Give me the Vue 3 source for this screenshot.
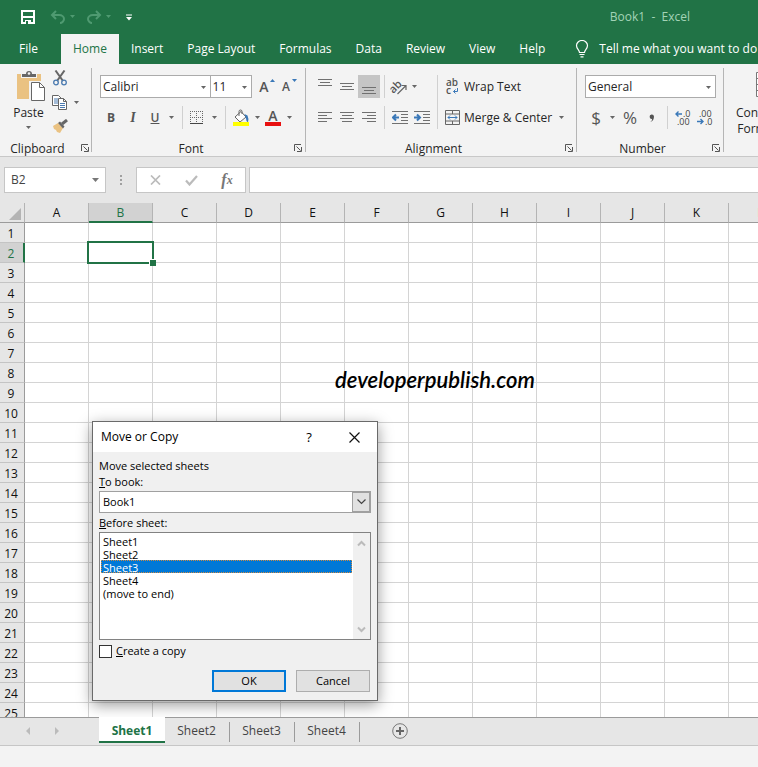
<script setup>
import { ref } from 'vue'

const tabs = ['File', 'Home', 'Insert', 'Page Layout', 'Formulas', 'Data', 'Review', 'View', 'Help']
const activeTab = ref('Home')

const columns = 'ABCDEFGHIJKLMNOP'.split('')
const rowCount = 40
const selectedCol = 'B'
const selectedRow = 2

const sheets = ['Sheet1', 'Sheet2', 'Sheet3', 'Sheet4']
const activeSheet = ref('Sheet1')

const targets = [...sheets, '(move to end)']
const beforeSheet = ref('Sheet3')
const book = ref('Book1')
const createCopy = ref(false)
const cellRef = ref('B2')
const formula = ref('')
const font = ref('Calibri')
const size = ref('11')
const format = ref('General')
</script>

<template>
  <div class="app">
    <header class="titlebar">
      <div class="quick">
        <button class="qbtn" aria-label="Save">
          <svg width="14" height="14" viewBox="0 0 14 14"><path d="M1 1h12v12H1z" fill="none" stroke="#fff" stroke-width="2" /><path d="M2 7h10" stroke="#fff" stroke-width="2" /><path d="M4 10h6v4H4z" fill="#fff" /><path d="M5 11h2v3H5z" fill="#217346" /></svg>
        </button>
        <button class="qbtn undo" aria-label="Undo">
          <svg width="26" height="14" viewBox="0 0 26 14"><path d="M6 1L2 5l4 4M2 5h7c3 0 5 2 5 4s-2 4-4 4" fill="none" stroke="#4f9a71" stroke-width="2" /><path d="M20 5h5l-2.500 3z" fill="#4f9a71" /></svg>
        </button>
        <button class="qbtn redo" aria-label="Redo">
          <svg width="26" height="14" viewBox="0 0 26 14"><path d="M10 1l4 4-4 4M14 5H7C4 5 2 7 2 9s2 4 4 4" fill="none" stroke="#4f9a71" stroke-width="2" /><path d="M20 5h5l-2.500 3z" fill="#4f9a71" /></svg>
        </button>
        <button class="qbtn more" aria-label="Customize toolbar">
          <svg width="6" height="7" viewBox="0 0 6 7"><path d="M0 1h6" stroke="#fff" /><path d="M0 3h6L3 6.500z" fill="#fff" /></svg>
        </button>
      </div>
      <div class="doc-title">Book1&nbsp; -&nbsp; Excel</div>
    </header>

    <nav class="tabs">
      <a v-for="t in tabs" :key="t" href="#" class="tab" :class="{ active: t === activeTab, file: t === 'File' }" @click.prevent="activeTab = t">{{ t }}</a>
      <a href="#" class="tell">
        <svg width="14" height="18" viewBox="0 0 14 18"><path d="M4.500 12.500c0-2.500-3-3.500-3-7a5.500 5 0 0 1 11 0c0 3.500-3 4.500-3 7zM4.500 14.500h5M5.500 16.800h3" fill="none" stroke="#fff" stroke-width="1.200" /></svg>
        <span>Tell me what you want to do</span>
      </a>
    </nav>

    <section class="ribbon">
      <div class="group clipboard">
        <div class="clip-body">
          <button class="paste">
            <svg width="30" height="32" viewBox="0 0 30 32"><path d="M1 4h24v25H1z" fill="#eac282" /><path d="M5 2h16v6H5z" fill="#f3f3f3" /><path d="M6 4h4a3 3 0 0 1 6 0h4v3H6z" fill="#666" /><circle cx="13" cy="3.500" r="1.300" fill="#f3f3f3" /><path d="M13 11h12l4 4v17H13z" fill="#f3f3f3" /><path d="M15.500 12.500h8l5 5v13h-13z" fill="#fff" stroke="#666" /><path d="M23.500 12.500v5h5" fill="none" stroke="#666" /></svg>
            <span>Paste</span>
            <svg class="arrow" width="5" height="3" viewBox="0 0 5 3"><path d="M0 0h5L2.500 3z" /></svg>
          </button>
          <div class="clip-side">
            <button class="ib" aria-label="Cut">
              <svg width="16" height="16" viewBox="0 0 16 16"><path d="M3.500 0.500L11 11M12.500 0.500L5 11" stroke="#666" stroke-width="2" fill="none" /><circle cx="4" cy="12.500" r="2.300" fill="none" stroke="#4a7ab0" stroke-width="1.300" /><circle cx="12" cy="12.500" r="2.300" fill="none" stroke="#4a7ab0" stroke-width="1.300" /></svg>
            </button>
            <div class="pair">
              <button class="ib" aria-label="Copy">
                <svg width="16" height="15" viewBox="0 0 16 15"><path d="M.5.5h6l3 3v7h-9z" fill="#fff" stroke="#666" /><path d="M2 4h4M2 6h4M2 8h4" stroke="#4a7ab0" /><path d="M6.500 3.500h5l3 3v8h-8z" fill="#fff" stroke="#666" /><path d="M11.500 3.500v3h3" stroke="#666" fill="none" /><path d="M8 8.500h5M8 10.500h5M8 12.500h5" stroke="#4a7ab0" /></svg>
              </button>
              <button class="drop" aria-label="Copy options"><svg class="arrow" width="5" height="3" viewBox="0 0 5 3"><path d="M0 0h5L2.500 3z" /></svg></button>
            </div>
            <button class="ib" aria-label="Format Painter">
              <svg width="16" height="14" viewBox="0 0 16 14"><path d="M1 7l5-3 5 5-3 5-3-1-1-2-2-1z" fill="#eac282" /><path d="M6 4l2-1.500 4.500 5L11 9.500z" fill="#666" /><path d="M10 5l5-4" stroke="#666" stroke-width="3" /></svg>
            </button>
          </div>
        </div>
        <div class="foot"><span>Clipboard</span><button class="launch" aria-label="Clipboard settings"><svg width="8" height="8" viewBox="0 0 8 8"><path d="M.5 7V.5H7M2.500 2.500l4 4M7.500 3v4.500H3" /></svg></button></div>
      </div>

      <div class="group fontg">
        <div class="rows">
          <div class="row">
            <div class="sel w-font"><select v-model="font" aria-label="Font"><option>Calibri</option></select><svg class="arrow" width="5" height="3" viewBox="0 0 5 3"><path d="M0 0h5L2.500 3z" /></svg></div>
            <div class="sel w-size"><select v-model="size" aria-label="Font size"><option>11</option></select><svg class="arrow" width="5" height="3" viewBox="0 0 5 3"><path d="M0 0h5L2.500 3z" /></svg></div>
            <button class="glyph grow" aria-label="Increase font size"><span>A</span><svg width="5" height="3" viewBox="0 0 5 3"><path d="M0 3h5L2.500 0z" fill="#3a78b8" /></svg></button>
            <button class="glyph shrink" aria-label="Decrease font size"><span>A</span><svg width="5" height="3" viewBox="0 0 5 3"><path d="M0 0h5L2.500 3z" fill="#3a78b8" /></svg></button>
          </div>
          <div class="row">
            <button class="b22 bold">B</button>
            <button class="b22 ital">I</button>
            <button class="b22 under">U</button>
            <button class="drop" aria-label="Underline styles"><svg class="arrow" width="5" height="3" viewBox="0 0 5 3"><path d="M0 0h5L2.500 3z" /></svg></button>
            <i class="sep s6"></i>
            <button class="b20" aria-label="Borders">
              <svg width="14" height="14" viewBox="0 0 14 14"><path d="M.5 0v13M6.500 0v13M12.500 0v13M0 .5h13M0 6.500h13" stroke="#666" stroke-dasharray="1 1" fill="none" /><path d="M0 12.500h13" stroke="#444" /></svg>
            </button>
            <button class="drop d14" aria-label="Border styles"><svg class="arrow" width="5" height="3" viewBox="0 0 5 3"><path d="M0 0h5L2.500 3z" /></svg></button>
            <i class="sep s4"></i>
            <button class="b22" aria-label="Fill color">
              <svg width="18" height="18" viewBox="0 0 18 18"><path d="M3 8l6-5.500L14 8l-6 5z" fill="#fff" stroke="#666" /><path d="M7 7V2.500a1.500 1.500 0 0 1 3 0V5" fill="none" stroke="#666" /><path d="M12.500 5l3 1.500q1.500 3 .5 7-2-1-2-4z" fill="#3a78b8" /><path d="M1 13h16v4H1z" fill="#ff0" /></svg>
            </button>
            <button class="drop" aria-label="Fill colors"><svg class="arrow" width="5" height="3" viewBox="0 0 5 3"><path d="M0 0h5L2.500 3z" /></svg></button>
            <button class="b22 fcolor" aria-label="Font color"><span>A</span></button>
            <button class="drop" aria-label="Font colors"><svg class="arrow" width="5" height="3" viewBox="0 0 5 3"><path d="M0 0h5L2.500 3z" /></svg></button>
          </div>
        </div>
        <div class="foot"><span>Font</span><button class="launch" aria-label="Font settings"><svg width="8" height="8" viewBox="0 0 8 8"><path d="M.5 7V.5H7M2.500 2.500l4 4M7.500 3v4.500H3" /></svg></button></div>
      </div>

      <div class="group align">
        <div class="align-body">
          <div class="rows align-left">
            <div class="row">
              <button class="b22" aria-label="Top align"><svg class="ln" width="14" height="16" viewBox="0 0 14 16"><path d="M0 .5h14M2 3.500h10M0 6.500h14" /></svg></button>
              <button class="b22" aria-label="Middle align"><svg class="ln" width="14" height="16" viewBox="0 0 14 16"><path d="M0 4.500h14M2 7.500h10M0 10.500h14" /></svg></button>
              <button class="b22 on" aria-label="Bottom align"><svg class="ln" width="14" height="16" viewBox="0 0 14 16"><path d="M0 8.500h14M2 11.500h10M0 14.500h14" /></svg></button>
              <i class="sep s4"></i>
              <button class="b20" aria-label="Orientation">
                <svg width="18" height="18" viewBox="0 0 18 18"><text x="-1" y="12" transform="rotate(-45 6 9)" class="ab big">ab</text><path d="M7.500 16L15.500 8M11.500 7.500h4.500v4.500" fill="none" stroke="#666" stroke-width="1.200" /></svg>
              </button>
              <button class="drop" aria-label="Orientation options"><svg class="arrow" width="5" height="3" viewBox="0 0 5 3"><path d="M0 0h5L2.500 3z" /></svg></button>
            </div>
            <div class="row">
              <button class="b22" aria-label="Align left"><svg class="ln" width="14" height="12" viewBox="0 0 14 12"><path d="M0 .5h14M0 3.500h9M0 6.500h14M0 9.500h9" /></svg></button>
              <button class="b22" aria-label="Center"><svg class="ln" width="14" height="12" viewBox="0 0 14 12"><path d="M0 .5h14M2 3.500h10M0 6.500h14M2 9.500h10" /></svg></button>
              <button class="b22" aria-label="Align right"><svg class="ln" width="14" height="12" viewBox="0 0 14 12"><path d="M0 .5h14M5 3.500h9M0 6.500h14M5 9.500h9" /></svg></button>
              <i class="sep s4"></i>
              <button class="b22" aria-label="Decrease indent"><svg class="ln" width="16" height="14" viewBox="0 0 16 14"><path d="M0 .5h16M9 3.500h7M9 6.500h7M9 9.500h7M0 12.500h16" /><path d="M7 6.500H1M4 3.500l-3 3 3 3" class="blue" /></svg></button>
              <button class="b22" aria-label="Increase indent"><svg class="ln" width="16" height="14" viewBox="0 0 16 14"><path d="M0 .5h16M9 3.500h7M9 6.500h7M9 9.500h7M0 12.500h16" /><path d="M0 6.500h6M3 3.500l3 3-3 3" class="blue" /></svg></button>
            </div>
          </div>
          <i class="longsep"></i>
          <div class="rows">
            <div class="row">
              <button class="wide">
                <svg width="16" height="18" viewBox="0 0 16 18"><text x="1" y="8" class="ab">ab</text><text x="1" y="16" class="ab">c</text><path d="M12.500 10v3.500H8.500M10.500 11.500l-2 2 2 2" fill="none" stroke="#3a78b8" /></svg>
                <span>Wrap Text</span>
              </button>
            </div>
            <div class="row">
              <button class="wide">
                <svg width="16" height="16" viewBox="0 0 16 16"><path d="M.5.500h14v14H.5zM.5 4h14M.5 11h14M7.500 0v4M7.500 11v4" fill="none" stroke="#666" /><path d="M3 7.500h9M5 5.500l-2 2 2 2M10 5.500l2 2-2 2" fill="none" stroke="#3a78b8" /></svg>
                <span>Merge &amp; Center</span>
              </button>
              <button class="drop mdrop" aria-label="Merge options"><svg class="arrow" width="5" height="3" viewBox="0 0 5 3"><path d="M0 0h5L2.500 3z" /></svg></button>
            </div>
          </div>
        </div>
        <div class="foot"><span>Alignment</span><button class="launch" aria-label="Alignment settings"><svg width="8" height="8" viewBox="0 0 8 8"><path d="M.5 7V.5H7M2.500 2.500l4 4M7.500 3v4.500H3" /></svg></button></div>
      </div>

      <div class="group number">
        <div class="rows">
          <div class="row">
            <div class="sel w-format"><select v-model="format" aria-label="Number format"><option>General</option></select><svg class="arrow" width="5" height="3" viewBox="0 0 5 3"><path d="M0 0h5L2.500 3z" /></svg></div>
          </div>
          <div class="row">
            <button class="b22 sym">$</button>
            <button class="drop" aria-label="Currency options"><svg class="arrow" width="5" height="3" viewBox="0 0 5 3"><path d="M0 0h5L2.500 3z" /></svg></button>
            <button class="b22 sym pct">%</button>
            <button class="b22" aria-label="Comma style"><svg width="6" height="8" viewBox="0 0 6 8"><path d="M1 8c2-1 2-2 2-3a2.200 2.200 0 1 1 2-2.500C5 5 4 7.500 1 8z" fill="#555" /></svg></button>
            <i class="sep s4"></i>
            <button class="b22" aria-label="Increase decimal"><svg width="16" height="16" viewBox="0 0 16 16"><text x="8" y="7" class="dec">.0</text><text x="2" y="15" class="dec">.00</text><path d="M7 4H1M3.500 1.500L1 4l2.500 2.500" class="dblue" /></svg></button>
            <button class="b22" aria-label="Decrease decimal"><svg width="16" height="16" viewBox="0 0 16 16"><text x="2" y="7" class="dec">.00</text><text x="8" y="15" class="dec">.0</text><path d="M0 11.500h6M3.500 9L6 11.500 3.500 14" class="dblue" /></svg></button>
          </div>
        </div>
        <div class="foot"><span>Number</span><button class="launch" aria-label="Number settings"><svg width="8" height="8" viewBox="0 0 8 8"><path d="M.5 7V.5H7M2.500 2.500l4 4M7.500 3v4.500H3" /></svg></button></div>
      </div>

      <div class="group styles">
        <button class="cond">
          <svg width="24" height="26" viewBox="0 0 24 26"><path d="M.5.5h23v24H.5zM0 6.500h24M0 12.500h24M0 18.500h24M12 0v25" fill="#fff" stroke="#777" /></svg>
          <span>Conditional</span><span>Formatting</span>
        </button>
      </div>
    </section>

    <section class="fbar">
      <div class="namebox">
        <input v-model="cellRef" aria-label="Name box" />
        <button aria-label="Named ranges"><svg width="7" height="4" viewBox="0 0 7 4"><path d="M0 0h7L3.500 4z" fill="#777" /></svg></button>
      </div>
      <svg class="dots" width="3" height="11" viewBox="0 0 3 11"><path d="M0 0h2v2H0zM0 4h2v2H0zM0 8h2v2H0z" fill="#a0a0a0" /></svg>
      <div class="fbtns">
        <button aria-label="Cancel entry"><svg width="11" height="10" viewBox="0 0 11 10"><path d="M1 .5l9 9M10 .5l-9 9" stroke="#bbb" stroke-width="1.700" /></svg></button>
        <button aria-label="Enter"><svg width="13" height="11" viewBox="0 0 13 11"><path d="M1 5.500L4.500 9.500 12 1" fill="none" stroke="#bbb" stroke-width="2.200" /></svg></button>
        <button class="fx">f<span>x</span></button>
      </div>
      <input v-model="formula" class="finput" aria-label="Formula bar" />
    </section>

    <main class="sheet">
      <table class="grid">
        <colgroup><col class="c-head" /><col v-for="c in columns" :key="c" class="c-cell" /></colgroup>
        <thead>
          <tr>
            <th class="corner"><svg width="12" height="12" viewBox="0 0 12 12"><path d="M12 0v12H0z" fill="#b4b4b4" /></svg></th>
            <th v-for="c in columns" :key="c" :class="{ cur: c === selectedCol }">{{ c }}</th>
          </tr>
        </thead>
        <tbody>
          <tr v-for="r in rowCount" :key="r">
            <th :class="{ cur: r === selectedRow }">{{ r }}</th>
            <td v-for="c in columns" :key="c"><div v-if="c === selectedCol && r === selectedRow" class="cursor"></div></td>
          </tr>
        </tbody>
      </table>

      <div class="mark">developerpublish.com</div>

      <form class="dialog" role="dialog" aria-labelledby="dlg-title" @submit.prevent>
        <div class="dlg-head">
          <span id="dlg-title">Move or Copy</span>
          <button type="button" class="help">?</button>
          <button type="button" class="close" aria-label="Close"><svg width="11" height="11" viewBox="0 0 11 11"><path d="M.5.5l10 10M10.500.5l-10 10" stroke="#111" stroke-width="1.200" /></svg></button>
        </div>
        <div class="dlg-body">
          <div class="line">Move selected sheets</div>
          <label class="line" for="book"><u>T</u>o book:</label>
          <div class="combo">
            <select id="book" v-model="book"><option>Book1</option></select>
            <span class="combo-btn"><svg width="9" height="6" viewBox="0 0 9 6"><path d="M.5.5l4 4 4-4" fill="none" stroke="#444" stroke-width="1.200" /></svg></span>
          </div>
          <label class="line before" for="before"><u>B</u>efore sheet:</label>
          <div class="list">
            <select id="before" v-model="beforeSheet" size="8"><option v-for="s in targets" :key="s" :value="s">{{ s }}</option></select>
            <div class="scroll">
              <svg width="9" height="7" viewBox="0 0 9 7"><path d="M1 5.500L4.500 2 8 5.500" fill="none" stroke="#bbb" stroke-width="2" /></svg>
              <svg width="9" height="7" viewBox="0 0 9 7"><path d="M1 1.500L4.500 5 8 1.500" fill="none" stroke="#bbb" stroke-width="2" /></svg>
            </div>
          </div>
          <label class="check"><input v-model="createCopy" type="checkbox" /><span><u>C</u>reate a copy</span></label>
          <div class="actions"><button class="ok">OK</button><button type="button">Cancel</button></div>
        </div>
      </form>
    </main>

    <nav class="sheettabs">
      <button class="nav" aria-label="Previous sheet"><svg width="5" height="8" viewBox="0 0 5 8"><path d="M4 0v8L0 4z" fill="#bbb" /></svg></button>
      <button class="nav" aria-label="Next sheet"><svg width="5" height="8" viewBox="0 0 5 8"><path d="M1 0v8l4-4z" fill="#bbb" /></svg></button>
      <div class="stabs">
        <button v-for="s in sheets" :key="s" class="stab" :class="{ active: s === activeSheet }" @click="activeSheet = s">{{ s }}</button>
      </div>
      <button class="add" aria-label="New sheet"><svg width="16" height="16" viewBox="0 0 16 16"><circle cx="8" cy="8" r="7.300" fill="none" stroke="#777" /><path d="M8 4v8M4 8h8" stroke="#666" stroke-width="2" /></svg></button>
    </nav>
    <footer class="status"></footer>
  </div>
</template>

<style>
body { margin: 0; overflow: hidden; }
</style>

<style scoped>
* { box-sizing: border-box; }
.app { display: flex; flex-direction: column; height: 100vh; overflow: hidden; font-family: "Open Sans", "Noto Sans", sans-serif; font-size: 12px; line-height: 16px; color: #262626; background: #e6e6e6; }
button, input, select { font: inherit; color: inherit; margin: 0; padding: 0; border: 0; background: none; border-radius: 0; outline: none; }
button { display: flex; align-items: center; justify-content: center; flex: none; white-space: nowrap; }
svg { display: block; flex: none; }
a { text-decoration: none; }
select { appearance: none; }
.arrow { fill: #666; }

.titlebar { display: flex; justify-content: space-between; align-items: center; height: 34px; flex: none; background: #217346; padding: 0 68px 0 21px; }
.quick { display: flex; align-items: center; }
.undo { margin-left: 15px; }
.redo { margin-left: 10px; }
.more { margin-left: 14px; }
.doc-title { color: #a3d3b6; }

.tabs { display: flex; align-items: stretch; height: 30px; flex: none; background: #217346; padding-left: 7px; overflow: hidden; }
.tab { display: flex; align-items: center; padding: 0 12px; color: #fff; white-space: nowrap; flex: none; }
.tab.file { margin-right: 11px; }
.tab.active { background: #f3f3f3; color: #217346; }
.tell { display: flex; align-items: center; gap: 10px; margin-left: 18px; color: #fff; white-space: nowrap; }

.ribbon { display: flex; height: 93px; flex: none; background: #f3f3f3; border-bottom: 1px solid #c8c8c8; overflow: hidden; }
.group { position: relative; display: flex; flex-direction: column; flex: none; height: 92px; padding: 11px 8px 0; }
.group::after { content: ""; position: absolute; right: 0; top: 4px; bottom: 4px; width: 1px; background: #b5b5b5; }
.clipboard { width: 92px; padding: 6px 0 0 7px; }
.fontg { width: 214px; }
.align { width: 271px; }
.number { width: 147px; }
.styles { padding: 8px 0 0 12px; }
.styles::after { display: none; }
.foot { position: relative; display: flex; justify-content: center; margin-top: auto; height: 15px; padding-right: 16px; }
.clipboard .foot { padding-right: 24px; }
.foot .launch { position: absolute; right: -4px; top: 3px; }
.clipboard .launch { right: 3px; }
.launch path { fill: none; stroke: #555; }
.rows { display: flex; flex-direction: column; gap: 8px; }
.row { display: flex; height: 23px; align-items: stretch; }
.clip-body { display: flex; }
.paste { flex-direction: column; width: 44px; justify-content: flex-start; padding-left: 4px; }
.paste span { margin-top: 3px; margin-right: 5px; }
.paste .arrow { margin-top: 5px; margin-right: 5px; }
.clip-side { display: flex; flex-direction: column; gap: 8px; align-items: flex-start; padding-left: 1px; }
.ib { width: 16px; height: 16px; }
.pair { display: flex; }
.drop { width: 10px; }
.pair .drop { margin-left: 3px; }
.d14 { width: 14px; }
.b22 { width: 22px; }
.b20 { width: 20px; }
.on { background: #c5c5c5; }
.sep { width: 1px; background: #d0d0d0; margin: 0 4px; }
.s6 { margin-left: 6px; }
.sel { position: relative; display: flex; background: #fff; border: 1px solid #ababab; }
.sel select { width: 100%; padding-left: 2px; }
.sel .arrow { position: absolute; right: 4px; top: 10px; pointer-events: none; }
.w-font { width: 112px; }
.w-size { width: 43px; margin-left: -1px; }
.w-format { width: 131px; }
.glyph { position: relative; width: 20px; color: #555; font-weight: 600; }
.glyph svg { position: absolute; right: 1px; top: 4px; }
.grow { font-size: 14px; margin-left: 4px; padding-right: 4px; }
.shrink { font-size: 12px; margin-left: 2px; padding-right: 4px; }
.bold { font-weight: 700; color: #555; }
.ital { font-family: "Liberation Serif", serif; font-style: italic; font-weight: 700; font-size: 14px; color: #555; }
.under { text-decoration: underline; font-weight: 600; color: #555; }
.fcolor span { display: block; width: 16px; height: 16px; line-height: 12px; border-bottom: 4px solid #e81010; font-size: 14px; font-weight: 600; color: #555; }
.ln path { fill: none; stroke: #707070; }
.ln path.blue { stroke: #3a78b8; stroke-width: 2; }
.ab { font-size: 10px; font-weight: 600; fill: #555; }
.ab.big { font-size: 11px; }
.align-body { display: flex; }
.align-left { width: 123px; flex: none; }
.longsep { width: 1px; background: #d0d0d0; margin-right: 7px; }
.wide { gap: 3px; }
.mdrop { margin-left: 4px; }
.sym { font-size: 17px; color: #555; }
.pct { margin-left: 2px; }
.dec { font-size: 9px; fill: #444; }
.dblue { fill: none; stroke: #3a78b8; stroke-width: 1.4px; }
.cond { flex-direction: column; }
.cond svg { margin-bottom: 7px; }

.fbar { display: flex; align-items: center; height: 46px; flex: none; padding-left: 4px; }
.namebox, .fbtns { display: flex; height: 26px; background: #fff; border: 1px solid #c6c6c6; flex: none; }
.namebox { width: 102px; }
.namebox input { width: 80px; padding-left: 6px; color: #444; }
.namebox button { width: 20px; }
.dots { margin: 0 13px 0 14px; }
.fbtns { width: 110px; }
.fbtns button { flex: 1; }
.fx { font-family: "Liberation Serif", serif; font-style: italic; font-weight: 700; font-size: 16px; color: #777; }
.fx span { font-size: 12px; }
.finput { flex: 1; height: 26px; margin-left: 3px; min-width: 0; background: #fff; border: 1px solid #c6c6c6; border-right: 0; }

.sheet { position: relative; flex: 1; min-height: 0; overflow: hidden; background: #fff; }
.grid { table-layout: fixed; width: 1px; border-collapse: separate; border-spacing: 0; }
.c-head { width: 25px; }
.c-cell { width: 64px; }
th, td { padding: 0; height: 20px; border-right: 1px solid #d4d4d4; border-bottom: 1px solid #d4d4d4; }
th { background: #e6e6e6; font-weight: 400; line-height: 16px; color: #111; }
thead th { border-right-color: #b4b4b4; border-bottom-color: #9b9b9b; }
tbody th { border-right-color: #9b9b9b; border-bottom-color: #c4c4c4; padding-right: 2px; padding-top: 2px; }
.corner svg { margin: 3px 0 0 9px; }
.cur { background: #d2d2d2; color: #217346; }
thead .cur { border-bottom: 2px solid #217346; padding-top: 1px; }
tbody .cur { border-right: 2px solid #217346; padding-right: 1px; }
td { position: relative; }
.cursor { position: absolute; inset: -2px; border: 2px solid #217346; z-index: 1; }
.cursor::after { content: ""; position: absolute; right: -4px; bottom: -4px; width: 6px; height: 6px; background: #217346; border: solid #fff; border-width: 1px 0 0 1px; }
.mark { position: absolute; left: 335px; top: 164px; font-family: "Segoe Print", "Lato", sans-serif; font-style: italic; font-weight: 600; font-size: 22px; line-height: 26px; color: #000; }

.dialog { position: absolute; z-index: 2; left: 92px; top: 218px; width: 286px; background: #f0f0f0; border: 1px solid #6a6a6a; box-shadow: 0 4px 14px rgba(0, 0, 0, .4); font-size: 11px; line-height: 16px; color: #000; }
.dlg-head { display: flex; align-items: center; height: 30px; background: #fff; padding: 0 8px; font-size: 12px; }
.help { margin-left: auto; width: 20px; font-size: 13px; }
.close { width: 30px; margin-left: 20px; }
.dlg-body { display: flex; flex-direction: column; padding: 6px 6px 8px; }
.line { height: 16px; }
.combo { display: flex; height: 22px; border: 1px solid #a0a0a0; background: #fff; margin-top: 1px; }
.combo select { flex: 1; padding-left: 3px; }
.combo-btn { display: flex; align-items: center; justify-content: center; width: 18px; background: #e1e1e1; border: 1px solid #a0a0a0; pointer-events: none; }
.before { margin-top: 2px; }
.list { display: flex; height: 108px; margin-top: 1px; border: 1px solid #828282; background: #fff; }
.list select { flex: 1; overflow: hidden; padding: 1px; height: 106px; }
.list option { height: 13px; min-height: 13px; line-height: 12px; padding: 0 2px; font-size: 11px; }
.list option:checked { background: linear-gradient(#0078d7, #0078d7); color: #fff; -webkit-text-fill-color: #fff; outline: 1px dotted #d08a40; outline-offset: -1px; }
.scroll { display: flex; flex-direction: column; justify-content: space-between; align-items: center; width: 17px; padding: 7px 0 6px; background: #f0f0f0; }
.check { display: flex; align-items: center; gap: 4px; margin-top: 3px; height: 16px; }
.check input { appearance: none; width: 13px; height: 13px; border: 1px solid #333; background: #fff; }
.actions { display: flex; justify-content: flex-end; gap: 10px; margin-top: 11px; padding-right: 1px; }
.actions button { width: 74px; height: 22px; background: #e1e1e1; border: 1px solid #adadad; }
.actions .ok { border: 2px solid #0078d7; }

.sheettabs { display: flex; align-items: flex-start; height: 29px; flex: none; background: #e6e6e6; border-top: 1px solid #9b9b9b; border-bottom: 1px solid #c6c6c6; padding-left: 14px; }
.nav { width: 28px; height: 26px; }
.stabs { display: flex; margin-left: 29px; }
.stab { position: relative; width: 65px; height: 25px; color: #444; }
.stab::after { content: ""; position: absolute; right: -1px; top: 4px; height: 20px; width: 1px; background: #9b9b9b; }
.stab.active { width: 66px; margin-right: -1px; height: 26px; margin-top: -1px; padding-top: 3px; background: #fff; border-bottom: 2px solid #217346; color: #217346; font-weight: 700; }
.stab.active::after { display: none; }
.add { margin-left: 33px; height: 26px; }
.status { height: 21px; flex: none; background: #f3f3f3; }
</style>
